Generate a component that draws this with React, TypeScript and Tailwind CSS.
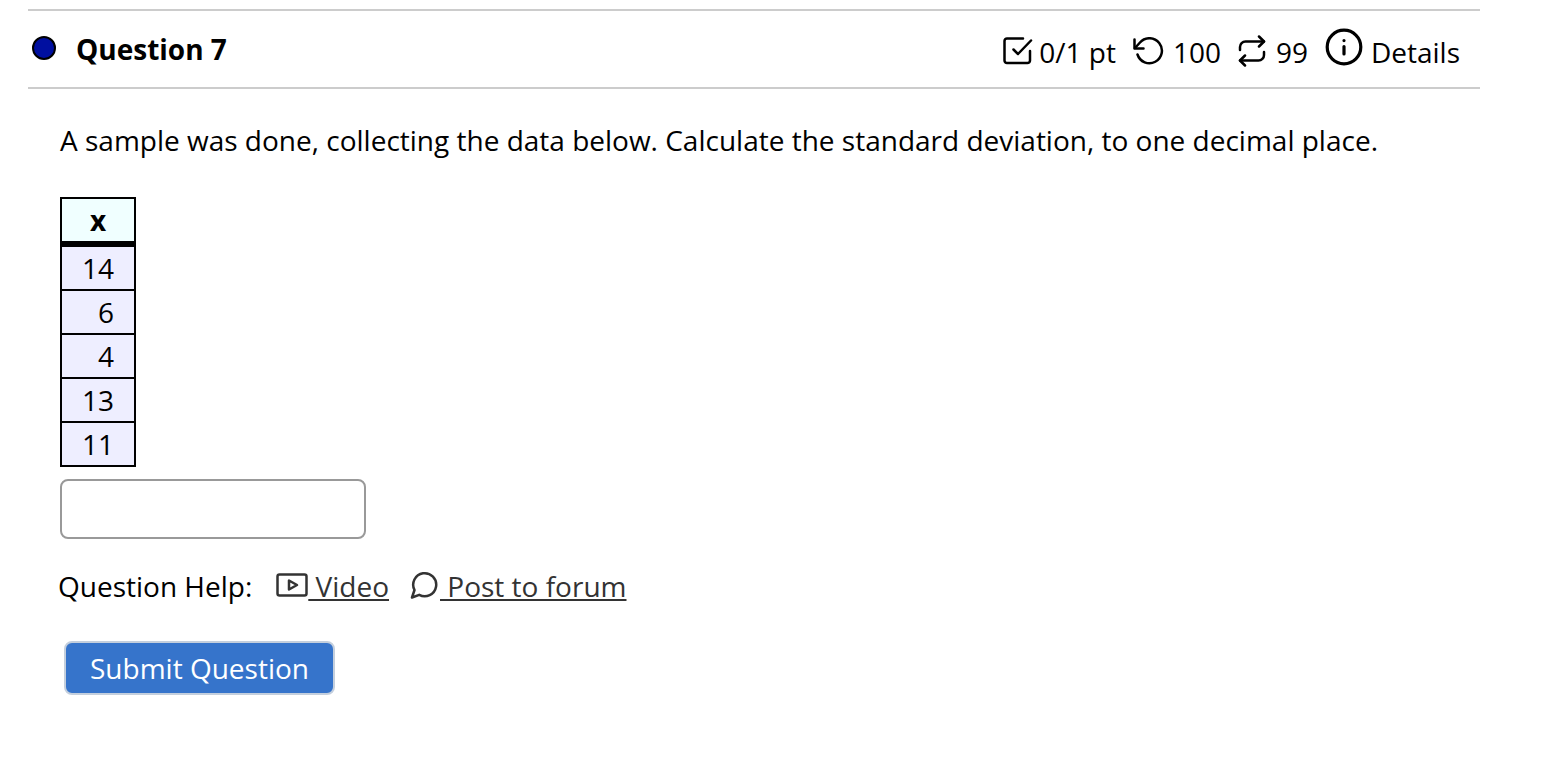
import { FC, ReactNode } from "react";

const values = [14, 6, 4, 13, 11];

type IconProps = {
  className?: string;
  viewBox: string;
  strokeWidth?: number;
  children: ReactNode;
};

const Icon: FC<IconProps> = ({ className, viewBox, strokeWidth = 2.5, children }) => (
  <svg
    className={className}
    viewBox={viewBox}
    fill="none"
    stroke="currentColor"
    strokeWidth={strokeWidth}
    strokeLinecap="round"
    strokeLinejoin="round"
    aria-hidden="true"
  >
    {children}
  </svg>
);

const CheckIcon = () => (
  <Icon className="mb-0.5 h-[28px] w-[30px]" viewBox="0 0 30 28">
    <path d="M20 1.500H4a2.500 2.500 0 0 0-2.500 2.500v19.500A2.500 2.500 0 0 0 4 26h20.500a2.500 2.500 0 0 0 2.500-2.500V14" />
    <path d="M10.500 12.500l4.500 4.500L28 3.500" />
  </Icon>
);

const UndoIcon = () => (
  <Icon className="mb-0.5 h-[28px] w-[32px]" viewBox="0 0 32 28">
    <path d="M1.500 2.500v9h9" />
    <path d="M2 11L7 5.500A12.500 12.500 0 1 1 4.500 17.500" />
  </Icon>
);

const RepeatIcon = () => (
  <Icon className="mb-0.5 h-[32px] w-[28px]" viewBox="0 0 28 32">
    <path d="M21 1.500l5 5-5 5" />
    <path d="M2 15v-3A5.500 5.500 0 0 1 7.500 6.500H26" />
    <path d="M7 30.500l-5-5 5-5" />
    <path d="M26 17v3a5.500 5.500 0 0 1-5.500 5.500H2" />
  </Icon>
);

const InfoIcon = () => (
  <Icon className="h-[38px] w-[38px]" viewBox="0 0 38 38" strokeWidth={3.2}>
    <circle cx="19" cy="19" r="16.800" />
    <path d="M19 18.500v7.500M19 12.500v.1" />
  </Icon>
);

const VideoIcon = () => (
  <Icon className="mb-0.5 h-[24px] w-[32px] shrink-0" viewBox="0 0 32 24">
    <rect x="1.500" y="1.500" width="29" height="21" rx="2" />
    <path d="M13 7.500v9l8-4.500z" />
  </Icon>
);

const ForumIcon = () => (
  <Icon className="mb-0.5 h-[28px] w-[28px] shrink-0" viewBox="0 0 28 28">
    <path d="M2 26.500l2.500-7.500a11.500 11.500 0 1 1 4.700 4.800z" />
  </Icon>
);

export default function App() {
  return (
    <div className="bg-white pt-[9px] pr-[82px] pb-16 pl-7 font-['Open_Sans','Noto_Sans',sans-serif] text-[28px] leading-[38px] text-black">
      <header className="flex h-20 items-center justify-between border-y-2 border-[#cccccc] pr-5 pl-1">
        <div className="flex items-center gap-5">
          <span className="mb-0.5 h-6 w-6 rounded-full border-2 border-black bg-[#000fa0]" />
          <h1 className="font-bold">Question 7</h1>
        </div>
        <div className="flex items-center gap-[17px] pt-1.5">
          <span className="flex items-center gap-1.5">
            <CheckIcon />
            0/1 pt
          </span>
          <span className="flex items-center gap-2">
            <UndoIcon />
            100
          </span>
          <span className="flex items-center gap-2.5">
            <RepeatIcon />
            99
          </span>
          <button type="button" className="flex items-center gap-2">
            <span className="pb-2.5">
              <InfoIcon />
            </span>
            Details
          </button>
        </div>
      </header>

      <main className="px-8 pt-8">
        <p id="prompt">
          A sample was done, collecting the data below. Calculate the standard deviation, to one decimal place.
        </p>

        <table className="mt-[38px] border-collapse">
          <thead>
            <tr>
              <th scope="col" className="h-[46px] border-2 border-b-6 border-black bg-[#f0ffff] px-5 py-0 text-center font-bold">
                x
              </th>
            </tr>
          </thead>
          <tbody>
            {values.map((value, index) => (
              <tr key={index} className="h-[44px] first:h-[46px]">
                <td className="border-2 border-black bg-[#eeeeff] px-5 py-0 text-right">{value}</td>
              </tr>
            ))}
          </tbody>
        </table>

        <input
          type="text"
          aria-labelledby="prompt"
          className="mt-3 block h-[60px] w-[306px] rounded-lg border-2 border-[#999999] bg-white px-3 outline-none"
        />

        <div className="mt-7 -ml-0.5 flex items-center">
          <span>Question Help:</span>
          <a href="#video" className="ml-6 flex items-center text-[#333333]">
            <VideoIcon />
            <span className="whitespace-pre underline decoration-2 underline-offset-2"> Video</span>
          </a>
          <a href="#forum" className="ml-[21px] flex items-center gap-0.5 text-[#333333]">
            <ForumIcon />
            <span className="whitespace-pre underline decoration-2 underline-offset-2"> Post to forum</span>
          </a>
        </div>

        <button
          type="button"
          className="mt-9 ml-1 rounded-lg border-2 border-[#c4cfdd] bg-[#3674cb] px-6 py-1.5 text-white"
        >
          Submit Question
        </button>
      </main>
    </div>
  );
}
